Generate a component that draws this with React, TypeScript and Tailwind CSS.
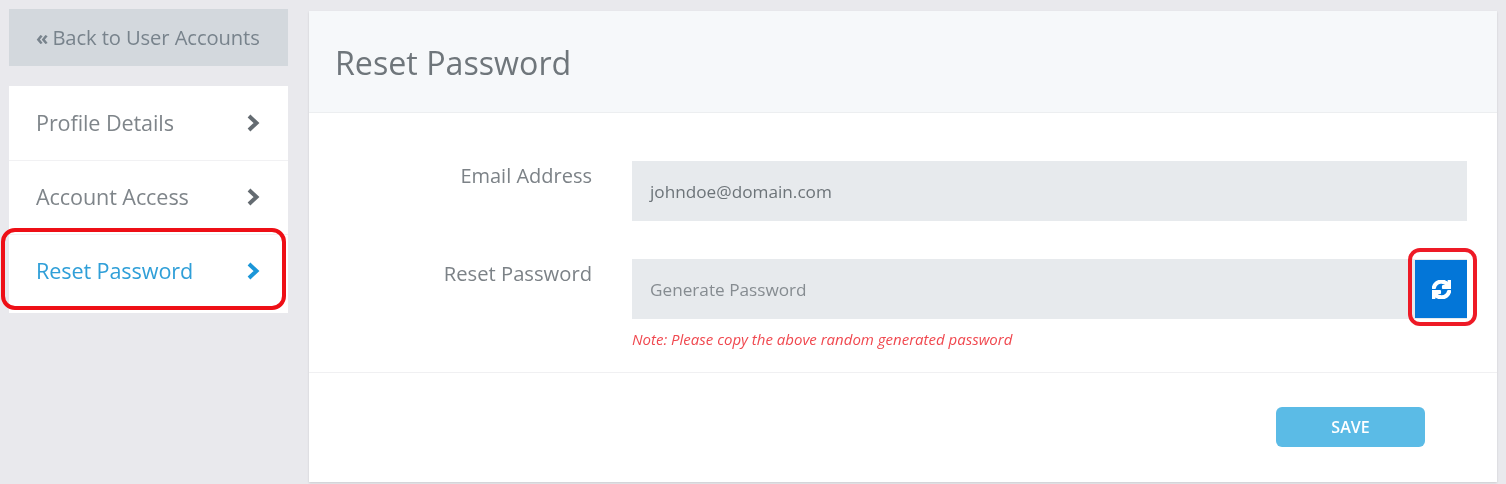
import React from "react";
import { FaSync } from "react-icons/fa";

const NAV = [
  { label: "Profile Details", active: false },
  { label: "Account Access", active: false },
  { label: "Reset Password", active: true },
];

const Chevron: React.FC<{ className: string }> = ({ className }) => (
  <svg viewBox="0 0 14 18" className={`w-[14px] h-[18px] ${className}`} fill="none">
    <path d="M3 2l7.5 7L3 16" stroke="currentColor" strokeWidth="4" />
  </svg>
);

const App: React.FC = () => {
  return (
    <div className="flex w-[1506px] h-[484px] overflow-hidden bg-[#e9e9ed] font-['Open_Sans',sans-serif] antialiased blur-[0.4px]">
      {/* Sidebar */}
      <div className="w-[279px] ml-[9px] mt-[9px] shrink-0">
        <div className="h-[57px] bg-[#d3d8dd] flex items-center pl-[27px] text-[20.2px] text-[#78838c]">
          <span className="font-bold mr-[5px] tracking-[-1px]">«</span>
          <span className="tracking-[-0.1px]">Back to User Accounts</span>
        </div>
        <div className="relative mt-[20px] bg-white h-[227px]">
          {NAV.map((item) => (
            <div
              key={item.label}
              className={`h-[74.5px] flex items-center justify-between pl-[27px] pr-[28px] text-[21.6px] ${
                item.active ? "text-[#2f9fd8] pb-[2px]" : "text-[#7f858a] border-b border-[#f1f1f3]"
              }`}
            >
              <span className="tracking-[-0.1px]">{item.label}</span>
              <Chevron className={item.active ? "text-[#1b96d8]" : "text-[#646b71]"} />
            </div>
          ))}
          {/* annotation */}
          <div className="absolute left-[-8px] right-[2px] top-[142px] h-[82px] border-[4px] border-[#ee0f16] rounded-[14px]" />
        </div>
      </div>

      {/* Main card */}
      <div className="w-[1188px] h-[471px] ml-[21px] mt-[11px] bg-white flex flex-col shadow-[0_1px_2px_rgba(0,0,0,0.12)]">
        <div className="h-[102px] shrink-0 bg-[#f6f8fa] border-b border-[#eceef0] flex items-center pl-[26px] pt-[4px] text-[32.2px] text-[#6f767b]">
          Reset Password
        </div>

        <div className="h-[260px] shrink-0 border-b border-[#f0f0f2] pt-[48px] pl-[323px] pr-[30px]">
          <div className="flex h-[60px]">
            <div className="w-[260px] -ml-[260px] pr-[40px] text-right text-[20px] leading-[30px] text-[#7c8287]">
              Email Address
            </div>
            <div className="flex-1 bg-[#e7eaed] flex items-center pl-[18px] pt-[2px] text-[17.2px] text-[#6d7479]">
              johndoe@domain.com
            </div>
          </div>

          <div className="flex h-[60px] mt-[38px]">
            <div className="w-[260px] -ml-[260px] pr-[40px] text-right text-[20.2px] leading-[28px] text-[#7c8287]">
              Reset Password
            </div>
            <div className="relative flex-1 bg-[#e7eaed] flex items-center pl-[18px] pt-[2px] text-[17.2px] text-[#868c91]">
              Generate Password
              <button className="absolute right-0 top-[1px] w-[52px] h-[58px] bg-[#0376d8] flex items-center justify-center">
                <FaSync className="w-[19px] h-[19px] text-white stroke-white stroke-[40]" />
              </button>
              {/* annotation */}
              <div className="absolute right-[-10px] top-[-11px] w-[69px] h-[78px] border-[4px] border-[#ee1a26] rounded-[12px]" />
            </div>
          </div>

          <div className="mt-[9px] text-[15px] italic text-[#f0484f]">
            Note: Please copy the above random generated password
          </div>
        </div>

        <div className="flex justify-end pt-[34px] pr-[72px]">
          <button className="w-[149px] h-[40px] rounded-[6px] bg-[#5bbbe6] text-white font-semibold text-[16px]">
            SAVE
          </button>
        </div>
      </div>
    </div>
  );
};

export default App;
